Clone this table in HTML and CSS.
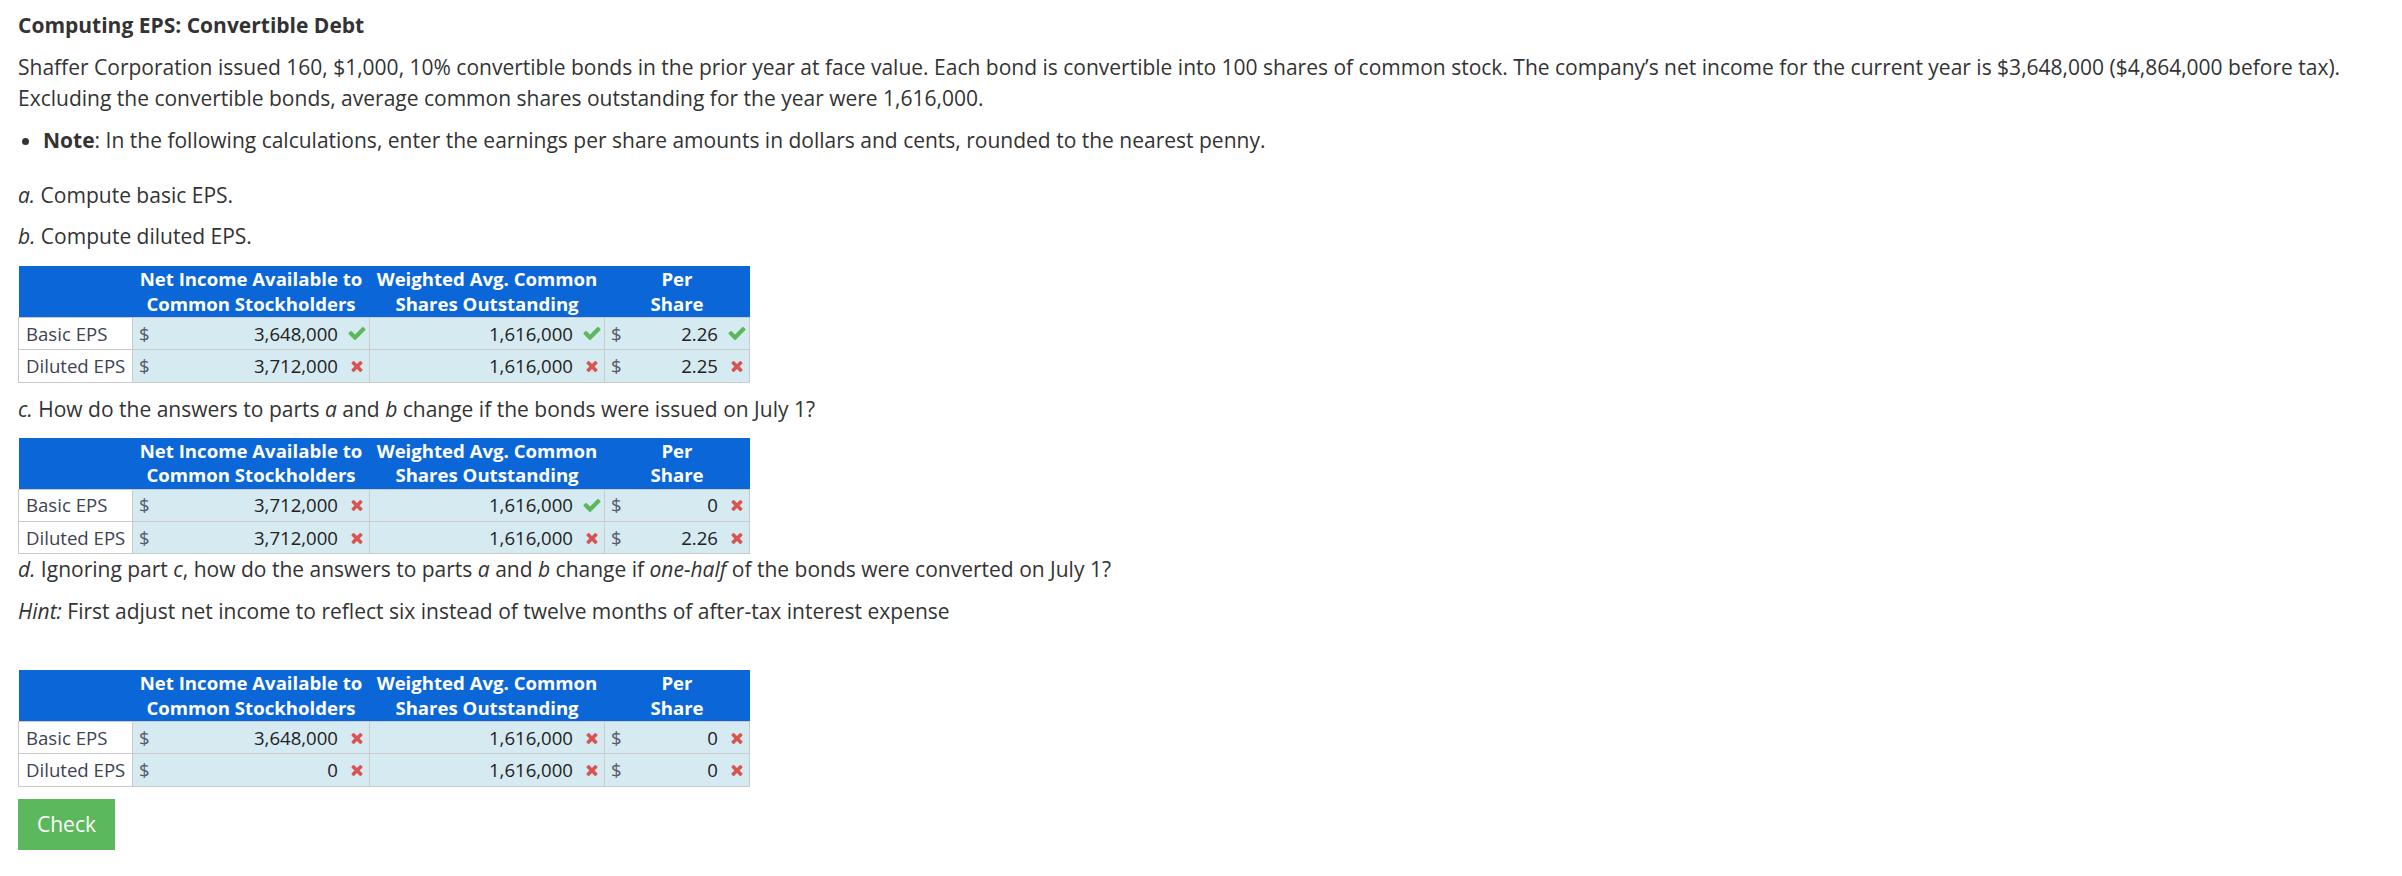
FILE: index.html
```html
<!DOCTYPE html>
<html lang="en">
<head>
<meta charset="utf-8">
<title>Computing EPS: Convertible Debt</title>
<link rel="stylesheet" href="styles.css">
</head>
<body>
<svg width="0" height="0" class="defs" aria-hidden="true">
  <defs>
    <symbol id="ok" viewBox="121 338 1550 1184"><path d="M1671 566q0 40-28 68l-724 724-136 136q-28 28-68 28t-68-28l-136-136-362-362q-28-28-28-68t28-68l136-136q28-28 68-28t68 28l294 295 656-657q28-28 68-28t68 28l136 136q28 28 28 68z"/></symbol>
    <symbol id="no" viewBox="112 270 1186 1284"><path d="M1298 1322q0 40-28 68l-136 136q-28 28-68 28t-68-28l-294-294-294 294q-28 28-68 28t-68-28l-136-136q-28-28-28-68t28-68l294-294-294-294q-28-28-28-68t28-68l136-136q28-28 68-28t68 28l294 294 294-294q28-28 68-28t68 28l136 136q28 28 28 68t-28 68l-294 294 294 294q28 28 28 68z"/></symbol>
  </defs>
</svg>
<main class="page">
  <h2 class="title">Computing EPS: Convertible Debt</h2>
  <p class="intro">Shaffer Corporation issued 160, $1,000, 10% convertible bonds in the prior year at face value. Each bond is convertible into 100 shares of common stock. The company’s net income for the current year is $3,648,000 ($4,864,000 before tax). Excluding the convertible bonds, average common shares outstanding for the year were 1,616,000.</p>
  <ul class="notes">
    <li><b>Note</b>: In the following calculations, enter the earnings per share amounts in dollars and cents, rounded to the nearest penny.</li>
  </ul>
  <p class="q q-a"><i>a.</i> Compute basic EPS.</p>
  <p class="q q-b"><i>b.</i> Compute diluted EPS.</p>

  <table class="eps eps-1">
    <colgroup><col class="c-label"><col class="c-ni"><col class="c-sh"><col class="c-ps"></colgroup>
    <thead>
      <tr><th></th><th>Net Income Available to<br>Common Stockholders</th><th>Weighted Avg. Common<br>Shares Outstanding</th><th>Per<br>Share</th></tr>
    </thead>
    <tbody>
      <tr>
        <td class="label">Basic EPS</td>
        <td><div class="cell"><span class="cur">$</span><span class="val">3,648,000</span><svg class="mark ok"><use href="#ok"/></svg></div></td>
        <td><div class="cell"><span class="val">1,616,000</span><svg class="mark ok"><use href="#ok"/></svg></div></td>
        <td><div class="cell"><span class="cur">$</span><span class="val">2.26</span><svg class="mark ok"><use href="#ok"/></svg></div></td>
      </tr>
      <tr>
        <td class="label">Diluted EPS</td>
        <td><div class="cell"><span class="cur">$</span><span class="val">3,712,000</span><svg class="mark no"><use href="#no"/></svg></div></td>
        <td><div class="cell"><span class="val">1,616,000</span><svg class="mark no"><use href="#no"/></svg></div></td>
        <td><div class="cell"><span class="cur">$</span><span class="val">2.25</span><svg class="mark no"><use href="#no"/></svg></div></td>
      </tr>
    </tbody>
  </table>

  <p class="q q-c"><i>c.</i> How do the answers to parts <i>a</i> and <i>b</i> change if the bonds were issued on July 1?</p>

  <table class="eps eps-2">
    <colgroup><col class="c-label"><col class="c-ni"><col class="c-sh"><col class="c-ps"></colgroup>
    <thead>
      <tr><th></th><th>Net Income Available to<br>Common Stockholders</th><th>Weighted Avg. Common<br>Shares Outstanding</th><th>Per<br>Share</th></tr>
    </thead>
    <tbody>
      <tr>
        <td class="label">Basic EPS</td>
        <td><div class="cell"><span class="cur">$</span><span class="val">3,712,000</span><svg class="mark no"><use href="#no"/></svg></div></td>
        <td><div class="cell"><span class="val">1,616,000</span><svg class="mark ok"><use href="#ok"/></svg></div></td>
        <td><div class="cell"><span class="cur">$</span><span class="val">0</span><svg class="mark no"><use href="#no"/></svg></div></td>
      </tr>
      <tr>
        <td class="label">Diluted EPS</td>
        <td><div class="cell"><span class="cur">$</span><span class="val">3,712,000</span><svg class="mark no"><use href="#no"/></svg></div></td>
        <td><div class="cell"><span class="val">1,616,000</span><svg class="mark no"><use href="#no"/></svg></div></td>
        <td><div class="cell"><span class="cur">$</span><span class="val">2.26</span><svg class="mark no"><use href="#no"/></svg></div></td>
      </tr>
    </tbody>
  </table>

  <p class="q q-d"><i>d.</i> Ignoring part <i>c</i>, how do the answers to parts <i>a</i> and <i>b</i> change if <i>one-half</i> of the bonds were converted on July 1?</p>
  <p class="q q-hint"><i>Hint:</i> First adjust net income to reflect six instead of twelve months of after-tax interest expense</p>

  <table class="eps eps-3">
    <colgroup><col class="c-label"><col class="c-ni"><col class="c-sh"><col class="c-ps"></colgroup>
    <thead>
      <tr><th></th><th>Net Income Available to<br>Common Stockholders</th><th>Weighted Avg. Common<br>Shares Outstanding</th><th>Per<br>Share</th></tr>
    </thead>
    <tbody>
      <tr>
        <td class="label">Basic EPS</td>
        <td><div class="cell"><span class="cur">$</span><span class="val">3,648,000</span><svg class="mark no"><use href="#no"/></svg></div></td>
        <td><div class="cell"><span class="val">1,616,000</span><svg class="mark no"><use href="#no"/></svg></div></td>
        <td><div class="cell"><span class="cur">$</span><span class="val">0</span><svg class="mark no"><use href="#no"/></svg></div></td>
      </tr>
      <tr>
        <td class="label">Diluted EPS</td>
        <td><div class="cell"><span class="cur">$</span><span class="val">0</span><svg class="mark no"><use href="#no"/></svg></div></td>
        <td><div class="cell"><span class="val">1,616,000</span><svg class="mark no"><use href="#no"/></svg></div></td>
        <td><div class="cell"><span class="cur">$</span><span class="val">0</span><svg class="mark no"><use href="#no"/></svg></div></td>
      </tr>
    </tbody>
  </table>

  <button class="btn-check" type="button">Check</button>
</main>
</body>
</html>
```

FILE: styles.css
```css
html, body {
  margin: 0;
  padding: 0;
  background: #ffffff;
}

body {
  font-family: "Open Sans", "Noto Sans", sans-serif;
  font-size: 21px;
  line-height: 31.5px;
  color: #333333;
}

.defs {
  position: absolute;
  width: 0;
  height: 0;
  overflow: hidden;
}

.page {
  padding: 10px 18px 20px 18px;
}

.title {
  margin: 0;
  font-size: 21px;
  line-height: 31.5px;
  font-weight: 700;
  color: #333333;
}

.intro {
  margin: 10px 0 0 0;
}

.notes {
  margin: 10px 0 0 0;
  padding-left: 25px;
}

.notes b {
  font-weight: 700;
}

.q {
  margin: 10px 0 0 0;
}

.q-a { margin-top: 23.5px; }
.q-b { margin-top: 9.5px; }
.q-c { margin-top: 11px; }
.q-d { margin-top: 0; }
.q-hint { margin-top: 10px; }

.eps {
  border-collapse: collapse;
  table-layout: fixed;
  width: 731px;
  font-size: 18.6px;
  line-height: 24px;
}

.eps-1 { margin-top: 14px; }
.eps-2 { margin-top: 12.5px; }
.eps-3 { margin-top: 43px; }

.c-label { width: 114px; }
.c-ni { width: 237px; }
.c-sh { width: 235px; }
.c-ps { width: 145px; }

.eps th {
  background: #0b67d8;
  color: #ffffff;
  font-weight: 700;
  text-align: center;
  padding: 1px 2px;
  line-height: 24.5px;
  height: 49px;
  border: 0;
  white-space: nowrap;
}

.eps td {
  background: #d6eaf1;
  border: 1px solid #cacaca;
  padding: 0;
  height: 31.3px;
  color: #222222;
}

.eps td.label {
  background: #ffffff;
  color: #3d4453;
  padding-left: 7px;
  white-space: nowrap;
}

.cell {
  display: flex;
  align-items: center;
  padding: 0 3px 0 6px;
}

.cur {
  color: #555b66;
}

.val {
  flex: 1;
  text-align: right;
}

.mark {
  flex: none;
  width: 18px;
  height: 13px;
  margin-left: 10px;
}

.mark.ok { fill: #5cb85c; }
.mark.no { fill: #d9534f; height: 12px; }

.btn-check {
  display: block;
  margin-top: 12px;
  width: 97px;
  height: 51px;
  padding: 0;
  border: 1.5px solid #5cb85c;
  background: #5cb85c;
  color: #ffffff;
  font-family: "Open Sans", "Noto Sans", sans-serif;
  font-size: 21px;
  line-height: 30px;
  border-radius: 0;
  cursor: pointer;
}
```
